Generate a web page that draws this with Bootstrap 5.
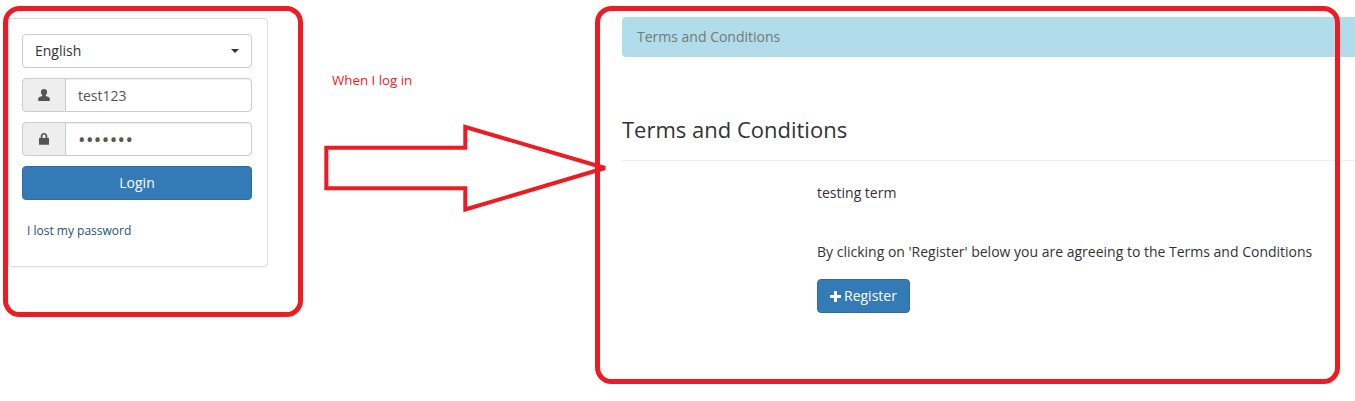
<!DOCTYPE html>
<html lang="en">
<head>
<meta charset="utf-8">
<title>Terms and Conditions</title>
<link href="https://cdn.jsdelivr.net/npm/bootstrap@5.3.0/dist/css/bootstrap.min.css" rel="stylesheet">
<style>
html,body{height:401px;overflow:hidden}
body{font-family:"Open Sans",sans-serif;font-size:14px;line-height:20px;color:#333;background:#fff;position:relative}
.page-flow{display:flex;align-items:flex-start;height:401px;overflow:hidden}
.login-col{width:268px;flex:none;padding:18px 0 0 8px}
.login-panel{border:1px solid #ddd;border-radius:4px;box-shadow:0 1px 1px rgba(0,0,0,.05);padding:15px 15px 25px 13px;height:249px;display:flex;flex-direction:column;gap:10px}
.login-panel .btn,.login-panel .form-control,.login-panel .input-group-text,.reg-btn{font-size:14px;line-height:20px;padding:6px 12px;height:34px;border-radius:4px}
.lang-btn{border:1px solid #ccc;color:#333;background:#fff;text-align:left}
.lang-btn.dropdown-toggle::after{margin-right:0;border-top-color:#333}
.login-panel .form-control{border-color:#ccc;color:#555;box-shadow:inset 0 1px 1px rgba(0,0,0,.075)}
.login-panel .input-group-text{width:44px;background:#eee;border-color:#ccc;color:#555;justify-content:center;padding:0}
.login-panel .input-group-text svg{width:12px;height:14px;fill:#555}
.login-panel .input-group .form-control{border-radius:0 4px 4px 0}
.login-panel .input-group .input-group-text{border-radius:4px 0 0 4px}
.login-panel .pw-field{font-size:20px;letter-spacing:.4px}
.blue-btn,.login-panel .blue-btn{background:#337ab7;border:1px solid #2e6da4;color:#fff}
.lost-link{color:#23527c;font-size:12px;text-decoration:none;margin:11px 0 0 5px;line-height:20px}
.note-col{width:346px;flex:none;padding:69px 0 0 64px;color:#ed1c24;font-size:13.3px;line-height:22px}
.terms-col{flex:none;width:900px;padding-top:17px;margin-left:8px}
.crumb-bar{background:#b0dde9;border-radius:4px 0 0 4px;height:40px;padding:0 15px;display:flex;align-items:center;color:#777;margin:0}
.terms-title{font-size:22px;line-height:30px;font-weight:400;color:#333;margin:57px 0 0;padding-bottom:16px;border-bottom:1px solid #eee}
.terms-body{margin-left:195px;padding-top:22px}
.terms-body p{margin:0}
.terms-body .terms-agree{margin-top:39px}
.reg-btn{margin-top:17px;display:inline-flex;align-items:center;gap:3px;padding:6px 12px}
.reg-btn svg{width:11px;height:11px;fill:#fff}
.annot{position:absolute;left:0;top:0;pointer-events:none}
</style>
</head>
<body>
<div class="page-flow">
  <div class="login-col">
    <form class="login-panel">
      <button type="button" class="btn lang-btn dropdown-toggle d-flex justify-content-between align-items-center w-100">English</button>
      <div class="input-group">
        <span class="input-group-text"><svg viewBox="0 0 12 14"><path d="M6 1C4 1 2.900 2.300 2.900 4 2.900 5.300 3.400 6.400 4.200 7.100L4.200 7.900 1.400 9.100C.6 9.500.2 10.100.2 10.900L.2 13 11.800 13 11.800 10.900C11.800 10.100 11.400 9.500 10.600 9.100L7.800 7.900 7.800 7.100C8.600 6.400 9.100 5.300 9.100 4 9.100 2.300 8 1 6 1Z"/></svg></span>
        <input type="text" class="form-control" value="test123" aria-label="Username">
      </div>
      <div class="input-group">
        <span class="input-group-text"><svg viewBox="0 0 12 14"><path d="M6 1C3.900 1 2.700 2.500 2.700 4.300L2.700 6 1 6 1 12.800 11 12.800 11 6 9.300 6 9.300 4.300C9.300 2.500 8.100 1 6 1ZM6 2.600C7 2.600 7.500 3.300 7.500 4.400L7.500 6 4.500 6 4.500 4.400C4.500 3.300 5 2.600 6 2.600Z"/></svg></span>
        <input type="password" class="form-control pw-field" value="test123" aria-label="Password">
      </div>
      <button type="button" class="btn blue-btn w-100">Login</button>
      <a href="#" class="lost-link">I lost my password</a>
    </form>
  </div>
  <div class="note-col">When I log in</div>
  <div class="terms-col">
    <div class="crumb-bar">Terms and Conditions</div>
    <h2 class="terms-title">Terms and Conditions</h2>
    <div class="terms-body">
      <p>testing term</p>
      <p class="terms-agree">By clicking on 'Register' below you are agreeing to the Terms and Conditions</p>
      <button type="button" class="btn blue-btn reg-btn"><svg viewBox="0 0 10 10"><path d="M3.700 0H6.300V3.700H10V6.300H6.300V10H3.700V6.300H0V3.700H3.700Z"/></svg>Register</button>
    </div>
  </div>
</div>
<svg class="annot" width="1355" height="401" viewBox="0 0 1355 401" fill="none" stroke="#ed1c24" stroke-width="5">
  <rect x="5.500" y="8.500" width="295" height="306" rx="14"/>
  <rect x="597.500" y="8.500" width="740" height="373" rx="14"/>
  <path d="M326.300 147.700H465.300V127L605 168 465.300 209.500V188.300H326.300Z" stroke-width="4" stroke-linejoin="miter" stroke-miterlimit="3"/>
</svg>
<script src="https://cdn.jsdelivr.net/npm/bootstrap@5.3.0/dist/js/bootstrap.bundle.min.js"></script>
</body>
</html>
